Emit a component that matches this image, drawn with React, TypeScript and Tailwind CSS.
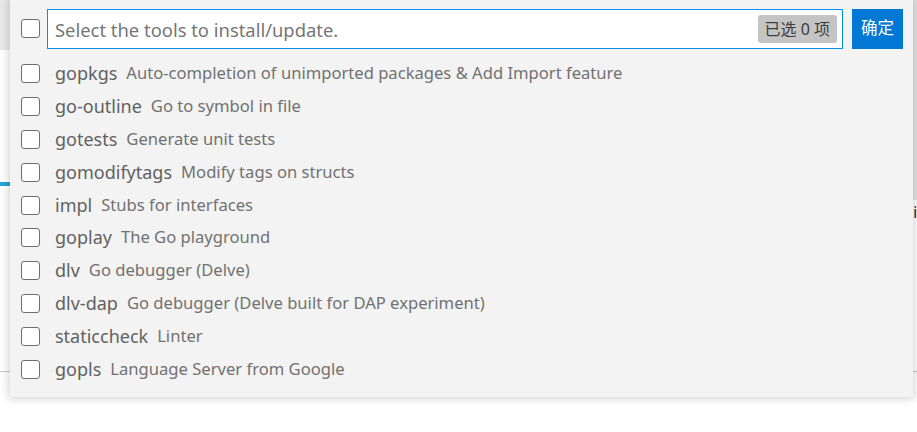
import { useState } from 'react';

const tools = [
  { name: 'gopkgs', desc: 'Auto-completion of unimported packages & Add Import feature' },
  { name: 'go-outline', desc: 'Go to symbol in file' },
  { name: 'gotests', desc: 'Generate unit tests' },
  { name: 'gomodifytags', desc: 'Modify tags on structs' },
  { name: 'impl', desc: 'Stubs for interfaces' },
  { name: 'goplay', desc: 'The Go playground' },
  { name: 'dlv', desc: 'Go debugger (Delve)' },
  { name: 'dlv-dap', desc: 'Go debugger (Delve built for DAP experiment)' },
  { name: 'staticcheck', desc: 'Linter' },
  { name: 'gopls', desc: 'Language Server from Google' },
];

function Box({ checked, onClick }: { checked: boolean; onClick: () => void }) {
  return (
    <button
      onClick={onClick}
      className={`w-[19px] h-[19px] rounded-[3px] border border-[#6e6e6e] shrink-0 flex items-center justify-center ${checked ? 'bg-[#0078d4] border-[#0078d4]' : 'bg-white'}`}
    >
      {checked && (
        <svg width="13" height="13" viewBox="0 0 16 16" fill="none" stroke="white" strokeWidth="2">
          <path d="M3 8.5l3 3 7-7" />
        </svg>
      )}
    </button>
  );
}

export default function App() {
  const [picked, setPicked] = useState<string[]>([]);
  const toggle = (n: string) =>
    setPicked(p => (p.includes(n) ? p.filter(x => x !== n) : [...p, n]));
  const all = picked.length === tools.length;

  return (
    <div
      className="relative w-[917px] h-[432px] bg-white overflow-hidden"
      style={{ fontFamily: '"Noto Sans", "Noto Sans CJK SC", sans-serif' }}
    >
      {/* editor bits behind the picker */}
      <div className="absolute left-0 top-0 w-[10px] h-[50px] bg-[#e8e8e8]" />
      <div className="absolute left-0 top-[182px] w-[10px] h-[4px] bg-[#20a6d9]" />
      <div className="absolute left-0 top-[371px] w-[10px] h-px bg-[#c8c8c8]" />
      <div className="absolute right-0 top-0 w-[4px] h-[200px] bg-[#e4e4e4]" />
      <div className="absolute right-0 top-[371px] w-[4px] h-px bg-[#c8c8c8]" />
      <div className="absolute left-[913px] top-[203px] text-[17px] leading-none text-[#333]">i</div>

      {/* quick pick */}
      <div className="absolute left-[10px] top-0 w-[903px] h-[397px] bg-[#f3f3f3] shadow-[0_0_8px_2px_rgba(0,0,0,0.16)]">
        <div className="flex items-center h-[56px] pl-[11px] pr-[10px] pt-px">
          <Box
            checked={all}
            onClick={() => setPicked(all ? [] : tools.map(t => t.name))}
          />
          <div className="ml-[7px] flex-1 h-[40px] bg-white border border-[#0090f1] flex items-center pl-[7px] pr-[5px]">
            <input
              placeholder="Select the tools to install/update."
              className="flex-1 outline-none bg-transparent text-[18.4px] text-[#333] placeholder:text-[#767676] pt-[3px]"
            />
            <span className="h-[28px] px-[7px] rounded-[3px] bg-[#c4c4c4] text-[#3c3c3c] text-[16px] flex items-center">
              已选 {picked.length} 项
            </span>
          </div>
          <button className="ml-[9px] w-[51px] h-[40px] bg-[#0078d4] text-white text-[16.5px]">
            确定
          </button>
        </div>
        <div className="flex flex-col pt-px">
          {tools.map(t => (
            <div key={t.name} className="flex items-center h-[32.9px] pl-[11px]">
              <Box checked={picked.includes(t.name)} onClick={() => toggle(t.name)} />
              <span className="ml-[15px] text-[18px] text-[#616161]">{t.name}</span>
              <span className="ml-[9px] text-[16.6px] text-[#717171]">{t.desc}</span>
            </div>
          ))}
        </div>
      </div>
    </div>
  );
}
